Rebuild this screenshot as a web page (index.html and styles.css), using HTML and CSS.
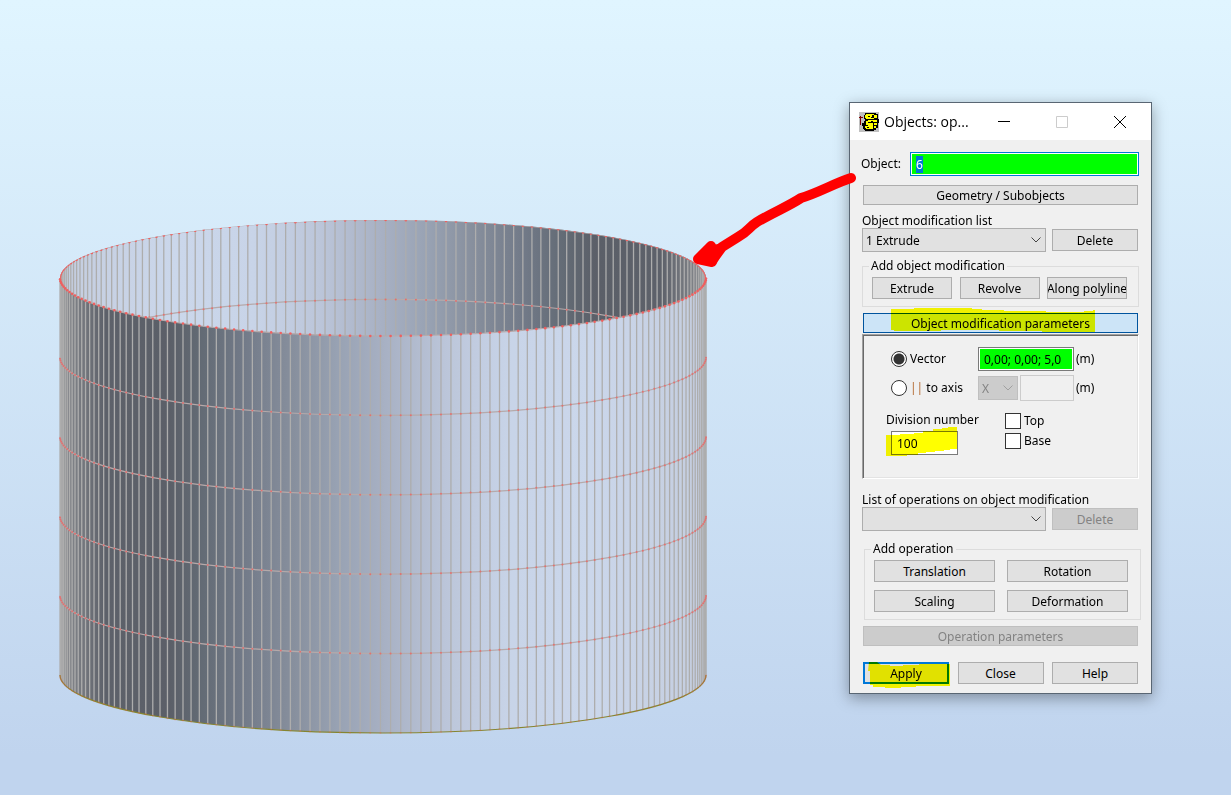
FILE: index.html
```html
<!DOCTYPE html>
<html lang="en">
<head>
    <meta charset="UTF-8">
    <meta name="viewport" content="width=device-width, initial-scale=1.0">
    <title>Objects: operations</title>
    <link rel="stylesheet" href="styles.css">
</head>
<body>
    <main class="scene">
        <svg class="model" viewBox="0 0 1231 795" aria-hidden="true">
            <defs>
                <linearGradient id="outside">
                    <stop offset="0" stop-color="#8c8e92"/>
                    <stop offset="0.03" stop-color="#777a80"/>
                    <stop offset="0.07" stop-color="#5d616a"/>
                    <stop offset="0.17" stop-color="#5b5f68"/>
                    <stop offset="0.22" stop-color="#636b75"/>
                    <stop offset="0.28" stop-color="#717987"/>
                    <stop offset="0.36" stop-color="#878f9d"/>
                    <stop offset="0.43" stop-color="#98a2b3"/>
                    <stop offset="0.5" stop-color="#a7b0c3"/>
                    <stop offset="0.6" stop-color="#bcc6da"/>
                    <stop offset="0.7" stop-color="#c8d4e8"/>
                    <stop offset="0.82" stop-color="#cbd7eb"/>
                    <stop offset="1" stop-color="#c4cddf"/>
                </linearGradient>
                <linearGradient id="inside" href="#outside" gradientTransform="translate(1 0) scale(-1 1)"/>
                <clipPath id="opening">
                    <ellipse cx="383" cy="278" rx="323" ry="58"/>
                </clipPath>
            </defs>
            <ellipse cx="383" cy="278" rx="323" ry="58" fill="url(#inside)"/>
            <g id="inner-mesh" clip-path="url(#opening)"></g>
            <path d="M60 278A323 58 0 0 0 706 278V675A323 58 0 0 1 60 675Z" fill="url(#outside)"/>
            <g id="outer-mesh"></g>
        </svg>

        <form class="dialog" onsubmit="return false">
            <header class="titlebar">
                <svg class="app-icon" viewBox="0 0 20 20" shape-rendering="crispEdges" aria-hidden="true">
                    <path fill="#c0c0c0" d="M0 0h20v20H0z"/>
                    <path d="M6 1h11v1h2v5h1v4h-1v5h-2v2h-2v1H6v-1H5v-4H3v-1h2V9h1V7H5V3h1z"/>
                    <path d="M3 11h2v2H3zM4 13h1v4H4z"/>
                    <path fill="#ff0" d="M7 2h8v1H7zM6 3h7v3H6zM15 3h3v3h-3zM7 6h8v1H7zM9 8h9v2H9zM7 9h2v4H7zM9 11h5v3H9zM15 11h3v2h-3zM6 14h8v2H6zM15 14h2v2h-2zM7 16h7v1H7z"/>
                    <path d="M9 4h2v1H9zM12 5h1v1h-1zM12 9h2v1h-2zM8 15h2v1H8z"/>
                    <path fill="#800000" d="M1 4h1v9H1zM0 5h4v1H0z"/>
                </svg>
                <h1>Objects: op...</h1>
                <button type="button" class="caption" aria-label="Minimize">
                    <svg viewBox="0 0 12 12"><path d="M0 5.5h12"/></svg>
                </button>
                <button type="button" class="caption" aria-label="Maximize" disabled>
                    <svg viewBox="0 0 12 12"><path d="M.5.5h11v11H.5z"/></svg>
                </button>
                <button type="button" class="caption" aria-label="Close window">
                    <svg viewBox="0 0 12 12"><path d="M0 0l12 12M12 0L0 12"/></svg>
                </button>
            </header>

            <div class="content">
                <div class="object-row">
                    <label for="object">Object:</label>
                    <input type="text" id="object" value="6">
                </div>
                <button type="button" class="wide">Geometry / Subobjects</button>

                <label class="list-label" for="modification">Object modification list</label>
                <div class="list-row">
                    <span class="dropdown">
                        <select id="modification"><option>1 Extrude</option></select>
                        <svg viewBox="0 0 10 6"><path d="M.5.5L5 5 9.5.5"/></svg>
                    </span>
                    <button type="button">Delete</button>
                </div>

                <fieldset class="add-modification">
                    <legend>Add object modification</legend>
                    <div class="three">
                        <button type="button">Extrude</button>
                        <button type="button">Revolve</button>
                        <button type="button">Along polyline</button>
                    </div>
                </fieldset>

                <button type="button" class="wide pressed">Object modification parameters
                    <svg class="marker marker-params" viewBox="0 0 204 24"><path d="M0 1h23V0h58v1h10v1h22v1h42v1h38V3h9V2h2v22h-53v-1h-43v-1H50v1H3v-1H0z"/></svg>
                </button>

                <section class="params">
                    <div class="param-row">
                        <label class="choice"><input type="radio" name="mode" checked>Vector</label>
                        <input type="text" class="vector" aria-label="Vector" value="0,00; 0,00; 5,0">
                        <span>(m)</span>
                    </div>
                    <div class="param-row">
                        <label class="choice"><input type="radio" name="mode"><span><span class="parallel">||</span> to axis</span></label>
                        <span class="dropdown axis">
                            <select aria-label="Axis" disabled><option>X</option></select>
                            <svg viewBox="0 0 10 6"><path d="M.5.5L5 5 9.5.5"/></svg>
                        </span>
                        <input type="text" class="length" aria-label="Length" disabled>
                        <span>(m)</span>
                    </div>
                    <div class="division-row">
                        <div class="division">
                            <label for="division">Division number</label>
                            <div class="division-field">
                                <input type="text" id="division" value="100">
                                <svg class="marker marker-division" viewBox="0 0 72 30"><path d="M0 8h14V7h14V6h9V4h10V2h9V1h6V0h9v22h-7v1h-6v1h-9v1h-9v1h-8v2H21v1H0z"/></svg>
                            </div>
                        </div>
                        <div class="caps">
                            <label><input type="checkbox">Top</label>
                            <label><input type="checkbox">Base</label>
                        </div>
                    </div>
                </section>

                <label class="list-label operations" for="operations">List of operations on object modification</label>
                <div class="list-row">
                    <span class="dropdown">
                        <select id="operations"><option></option></select>
                        <svg viewBox="0 0 10 6"><path d="M.5.5L5 5 9.5.5"/></svg>
                    </span>
                    <button type="button" disabled>Delete</button>
                </div>

                <fieldset class="add-operation">
                    <legend>Add operation</legend>
                    <div class="two">
                        <button type="button">Translation</button>
                        <button type="button">Rotation</button>
                        <button type="button">Scaling</button>
                        <button type="button">Deformation</button>
                    </div>
                </fieldset>

                <button type="button" class="wide" disabled>Operation parameters</button>

                <div class="actions">
                    <button type="submit" class="default">Apply
                        <svg class="marker marker-apply" viewBox="0 0 82 26"><path d="M1 0h8l4 3h9v1h13V3h16V2h31v22H48v1H33v1H17v-1H5v-2H2V9H0z"/></svg>
                    </button>
                    <button type="button">Close</button>
                    <button type="button">Help</button>
                </div>
            </div>
        </form>

        <svg class="model arrow" viewBox="0 0 1231 795" aria-hidden="true">
            <path d="M851 178C835 183 818 193 801 198C789 206 774 212 757 222C749 227 748 232 738 237L722 247L714 258"/>
            <path class="head" d="M711 246L698 259L712 262L718 249L706 257"/>
        </svg>
    </main>

    <script src="script.js"></script>
</body>
</html>
```
FILE: styles.css
```css
* {
    box-sizing: border-box;
}
body {
    margin: 0;
    font: 12px/16px "Noto Sans", "Open Sans", sans-serif;
    color: #000;
}
.scene {
    position: relative;
    min-height: 100vh;
    overflow: hidden;
    background: linear-gradient(#e0f5ff, #c0d4ee 95%);
}
.model {
    display: block;
    width: 100%;
}
.arrow {
    position: absolute;
    top: 0;
    left: 0;
    fill: none;
    stroke: #f00;
    stroke-width: 10;
    stroke-linecap: round;
    stroke-linejoin: round;
    pointer-events: none;
}
.arrow .head {
    fill: #f00;
}
.rib {
    stroke: #adadad;
    stroke-width: 1.3;
}
.ring {
    fill: none;
    stroke: #b5aaaa;
    stroke-width: 1.2;
}
.ring-base {
    stroke: #858530;
}
.node {
    fill: #f55858;
}

/* dialog window */
.dialog {
    position: absolute;
    top: 102px;
    left: 849px;
    width: 303px;
    border: 1px solid #596673;
    background: #f0f0f0;
    box-shadow: 0 4px 14px rgba(0, 0, 0, 0.35);
}
.titlebar {
    display: flex;
    align-items: center;
    height: 37px;
    padding: 0 2px 0 9px;
    background: #fff;
}
.app-icon {
    width: 20px;
    height: 20px;
    margin-right: 5px;
}
.titlebar h1 {
    flex: 1;
    margin: 0;
    font: 14px/20px "Open Sans", "Noto Sans", sans-serif;
    white-space: nowrap;
}
.titlebar .caption {
    width: 58px;
    height: 36px;
    border: 0;
    background: none;
}
.caption svg {
    width: 12px;
    height: 12px;
    fill: none;
    stroke: #000;
}
.caption:disabled svg {
    stroke: #ccc;
}
.content {
    display: flex;
    flex-direction: column;
    padding: 12px 12px 9px;
}

/* controls */
button {
    position: relative;
    display: flex;
    align-items: center;
    justify-content: center;
    height: 22px;
    padding: 1px 0 0;
    border: 1px solid #adadad;
    background: #e1e1e1;
    font: inherit;
    color: #000;
    white-space: nowrap;
}
button:disabled {
    border-color: #bfbfbf;
    background: #ccc;
    color: #838383;
}
.wide {
    height: 20px;
    margin: 0 1px;
}
.pressed {
    border-color: #00549e;
    background: #cce4f7;
}
.default {
    border: 2px solid #0078d7;
}
input[type="text"] {
    height: 24px;
    padding: 0 5px;
    border: 1px solid #7a7a7a;
    background: #fff;
    font: inherit;
    color: #000;
}
input[type="radio"],
input[type="checkbox"] {
    appearance: none;
    width: 16px;
    height: 16px;
    margin: 0 3px 0 0;
    border: 1px solid #333;
    background: #fff;
}
input[type="radio"] {
    border-radius: 50%;
}
input[type="radio"]:checked {
    background: radial-gradient(circle, #333 5px, #fff 6px);
}
.dropdown {
    position: relative;
    display: flex;
    width: 184px;
}
.dropdown select {
    appearance: none;
    width: 100%;
    height: 24px;
    padding: 1px 3px 0;
    border: 1px solid #adadad;
    border-radius: 0;
    background: #e1e1e1;
    font: inherit;
    color: #000;
}
.dropdown svg {
    position: absolute;
    top: 9px;
    right: 5px;
    width: 10px;
    height: 6px;
    fill: none;
    stroke: #444;
    pointer-events: none;
}
fieldset {
    min-width: 0;
    margin: 0;
    border: 1px solid #dcdcdc;
}
legend {
    padding: 0 2px;
}

/* rows */
.object-row {
    display: flex;
    align-items: center;
    justify-content: space-between;
    margin: 0 0 9px -1px;
}
#object {
    width: 229px;
    border-color: #0078d7;
    background: #0f0;
    box-shadow: inset 0 0 0 1px #fff;
    outline: none;
}
#object::selection {
    background: #0078d7;
    color: #fff;
}
.list-label {
    margin: 8px 0 -1px;
}
.operations {
    margin-top: 13px;
}
.list-row {
    display: flex;
    align-items: center;
    justify-content: space-between;
}
.list-row button {
    width: 86px;
    margin-right: 1px;
}
.add-modification {
    margin: 6px 0;
    padding: 3px 11px 7px 9px;
}
.add-modification legend {
    margin-left: -3px;
}
.three {
    display: grid;
    grid-template-columns: repeat(3, 80px);
    justify-content: space-between;
}
.three button {
    overflow: hidden;
}
.params {
    height: 145px;
    margin-top: 1px;
    padding: 12px 0 0 23px;
    border: 1px solid;
    border-color: #a0a0a0 #fff #fff #a0a0a0;
    box-shadow: inset 1px 1px #696969, inset -1px -1px #e3e3e3;
}
.param-row {
    display: flex;
    align-items: center;
    margin-bottom: 4px;
}
.choice {
    display: flex;
    align-items: center;
    width: 87px;
    margin-left: 5px;
}
.parallel {
    color: #b46a32;
}
.vector {
    width: 96px;
    margin-right: 2px;
}
input.vector {
    background: #0f0;
    box-shadow: inset 0 0 0 1px #fff;
}
.axis {
    width: 40px;
    margin-right: 2px;
}
.axis select {
    border-color: #bfbfbf;
    background: #ccc;
    color: #838383;
    opacity: 1;
}
.axis svg {
    stroke: #a0a0a0;
}
input.length {
    width: 54px;
    height: 26px;
    margin-right: 2px;
    border-color: #ccc;
    background: #f0f0f0;
}
.division-row {
    display: flex;
    margin-top: 11px;
}
.division {
    width: 119px;
}
.division label {
    display: block;
}
.division-field {
    position: relative;
    margin: 3px 0 0 5px;
}
#division {
    display: block;
    width: 67px;
}
.caps label {
    display: flex;
    align-items: center;
    margin: 1px 0 4px;
}
.add-operation {
    margin: 10px -2px 6px 2px;
    padding: 3px 12px 7px 9px;
}
.add-operation legend {
    margin-left: -3px;
}
.two {
    display: grid;
    grid-template-columns: 1fr 1fr;
    gap: 8px 12px;
}
.actions {
    display: grid;
    grid-template-columns: repeat(3, 86px);
    justify-content: space-between;
    margin: 16px 1px 0;
}

/* highlighter strokes */
.marker {
    position: absolute;
    fill: #ff0;
    mix-blend-mode: multiply;
    pointer-events: none;
}
.marker-params {
    top: -6px;
    left: 27px;
    width: 204px;
    height: 24px;
}
.marker-division {
    top: -4px;
    left: -5px;
    width: 72px;
    height: 30px;
}
.marker-apply {
    top: -2px;
    left: 3px;
    width: 82px;
    height: 26px;
}
```
FILE: script.js
```js
const svgNS = "http://www.w3.org/2000/svg";
const cx = 383, rx = 323, ry = 58;
const rimY = 278, storey = 79.4, divisions = 200, phase = -0.008;

function add(parent, tag, attrs) {
    const el = document.createElementNS(svgNS, tag);
    for (const key in attrs) el.setAttribute(key, attrs[key]);
    parent.appendChild(el);
}

// side is 1 for the outer (front) wall and -1 for the inner (back) wall
function drawMesh(group, side, storeys) {
    const points = [];
    for (let i = 0; i < divisions; i++) {
        const a = phase + i * 2 * Math.PI / divisions;
        const depth = Math.cos(a);
        if (depth * side >= 0) points.push([cx + rx * Math.sin(a), rimY + ry * depth]);
    }
    for (const [x, y] of points) {
        add(group, "line", { class: "rib", x1: x, x2: x, y1: y, y2: y + storeys * storey });
    }
    for (let s = 0; s <= storeys; s++) {
        const y0 = rimY + s * storey;
        const sweep = side > 0 ? 0 : 1;
        add(group, "path", {
            class: s === 5 ? "ring ring-base" : "ring",
            d: `M${cx - rx} ${y0}A${rx} ${ry} 0 0 ${sweep} ${cx + rx} ${y0}`
        });
        for (const [x, y] of points) {
            add(group, "circle", {
                class: "node", cx: x, cy: y + s * storey,
                r: s === 0 ? 1.3 : 1,
                opacity: s === 5 ? 0.3 : s === 0 ? 0.9 : 0.7
            });
        }
    }
}

drawMesh(document.getElementById("inner-mesh"), -1, 5);
drawMesh(document.getElementById("outer-mesh"), 1, 5);

const objectField = document.getElementById("object");
objectField.focus();
objectField.select();
```
